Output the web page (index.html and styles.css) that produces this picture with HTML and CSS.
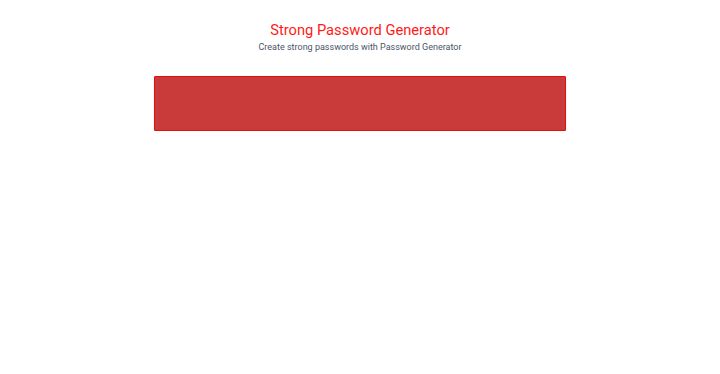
FILE: index.html
```html
<!DOCTYPE html>
<html>
<head>
<meta charset="utf-8">
<link rel="stylesheet" href="styles.css">
</head>
<body>
<div class="page">
  <header class="header">
    <h1 class="title">Strong Password Generator</h1>
    <p class="subtitle">Create strong passwords with Password Generator</p>
  </header>
  <div class="result"></div>
</div>
</body>
</html>
```
FILE: styles.css
```css
html, body {
  margin: 0;
  padding: 0;
  background: #ffffff;
}
body {
  font-family: Roboto, "Liberation Sans", sans-serif;
}
.page {
  display: flex;
  flex-direction: column;
  align-items: center;
  padding-top: 20px;
}
.header {
  text-align: center;
}
.title {
  margin: 0;
  font-size: 14.7px;
  font-weight: 400;
  color: #ff1a1a;
  line-height: 20px;
}
.subtitle {
  margin: 0;
  font-size: 9px;
  color: #4a5568;
  line-height: 14px;
}
.result {
  margin-top: 22px;
  width: 410px;
  height: 53px;
  background: #c93a3a;
  border: 1px solid #e01010;
  border-radius: 1px;
  box-shadow: 0 1px 2px rgba(0,0,0,0.15);
}
```
